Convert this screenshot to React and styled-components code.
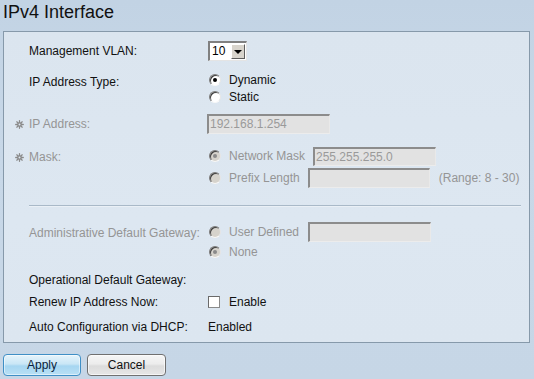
import React from "react";
import styled, { createGlobalStyle, css } from "styled-components";

const Global = createGlobalStyle`
  html, body { margin: 0; padding: 0; }
  body {
    width: 534px; height: 379px; overflow: hidden;
    background: linear-gradient(180deg, #c2d3e4 0%, #c8d8e8 40%, #c6d6e6 100%);
    font-family: "Liberation Sans", Arial, sans-serif;
    font-size: 12px; color: #111;
  }
`;

const Page = styled.div`
  padding: 0 4px 0 3px;
`;

const Title = styled.h1`
  margin: 0; padding-top: 1px;
  height: 31px; box-sizing: border-box;
  font-size: 18px; font-weight: normal; line-height: 22px;
  color: #111;
`;

const Panel = styled.div`
  width: 527px; height: 312px; box-sizing: border-box;
  border: 1px solid #8699aa;
  background: linear-gradient(180deg, #dbe5ef 0%, #dde7f1 60%, #dce6f0 100%);
  padding: 0 8px 0 25px;
`;

const Row = styled.div`
  display: grid;
  grid-template-columns: 179px 1fr;
  align-items: center;
  height: ${p => p.$h || 20}px;
  margin-top: ${p => p.$mt || 0}px;
`;

const Label = styled.div`
  display: flex; align-items: center;
  color: ${p => (p.$disabled ? "#959595" : "#111")};
  margin-left: ${p => (p.$icon ? -14 : 0)}px;
  gap: 5px;
  align-self: ${p => (p.$top ? "start" : "center")};
  padding-top: ${p => (p.$top ? 4 : 0)}px;
`;

const Controls = styled.div`
  display: flex; align-items: center;
`;

const Stack = styled.div`
  display: flex; flex-direction: column;
`;

const Line = styled.div`
  display: flex; align-items: center;
  height: ${p => p.$h || 20}px;
  margin-top: ${p => p.$mt || 0}px;
`;

const Radio = styled.span`
  display: inline-block; box-sizing: border-box;
  width: 12px; height: 12px; border-radius: 50%;
  margin-left: 1px; margin-right: 8px;
  border: 1px solid;
  border-color: #7c7c7c #e6e6e6 #f8f8f8 #7c7c7c;
  background: ${p => (p.$disabled ? "#d6d3cc" : "#fff")};
  box-shadow: inset 1px 1px 0 #3e3e3e;
  position: relative;
  ${p => p.$checked && css`
    &::after {
      content: ""; position: absolute;
      left: 3px; top: 3px; width: 4px; height: 4px; border-radius: 50%;
      background: ${p.$disabled ? "#8a8a8a" : "#000"};
    }
  `}
`;

const OptText = styled.span`
  color: ${p => (p.$disabled ? "#959595" : "#111")};
  margin-right: ${p => p.$mr || 0}px;
`;

const TextBox = styled.div`
  box-sizing: border-box;
  width: ${p => p.$w}px; height: ${p => p.$hh || 20}px;
  margin-left: ${p => p.$ml || 0}px;
  background: #e2e2e2;
  border-top: 2px solid #8c8c8c;
  border-left: 2px solid #8c8c8c;
  border-right: 1px solid #e9e9e9;
  border-bottom: 1px solid #ececec;
  color: #9a9a9a;
  padding-left: 1px;
  line-height: 16px;
  font-size: 12px;
`;

const Select = styled.div`
  box-sizing: border-box;
  width: 39px; height: 20px;
  display: flex; align-items: stretch;
  background: #fff;
  border-top: 2px solid #808080; border-left: 2px solid #808080;
  border-right: 1px solid #e4e4e4; border-bottom: 1px solid #e4e4e4;
  margin-top: 1px;
`;

const SelectValue = styled.span`
  flex: 1; padding-left: 2px; line-height: 17px; font-size: 12px; color: #000;
`;

const SelectBtn = styled.span`
  width: 14px; margin: 1px;
  background: #d8d4cc;
  border-top: 1px solid #fff; border-left: 1px solid #fff;
  border-right: 1px solid #5e5e5e; border-bottom: 1px solid #5e5e5e;
  box-sizing: border-box;
  display: flex; align-items: center; justify-content: center;
`;

const Arrow = styled.span`
  width: 0; height: 0;
  border-left: 4px solid transparent; border-right: 4px solid transparent;
  border-top: 4px solid #000;
`;

const Checkbox = styled.span`
  display: inline-block; box-sizing: border-box;
  width: 12px; height: 12px; background: #fff;
  border: 1px solid #8a8a8a;
  border-top-color: #6a6a6a; border-left-color: #6a6a6a;
  margin-right: 9px;
`;

const Separator = styled.div`
  margin-top: 17px;
  height: 1px; background: #a9b9c8;
  border-bottom: 1px solid #eaf0f6;
`;

const Hint = styled.span`
  color: #959595; margin-left: 9px;
`;

const Buttons = styled.div`
  display: flex; gap: 6px; margin-top: 11px;
`;

const Button = styled.button`
  box-sizing: border-box;
  width: ${p => p.$w}px; height: 22px;
  border-radius: 4px;
  font-family: "Liberation Sans", Arial, sans-serif;
  font-size: 12px; padding: 0; cursor: pointer;
  ${p => p.$primary ? css`
    border: 1px solid #3f8fc6;
    color: #0a1e3a;
    background: linear-gradient(180deg, #e6f4fb 0%, #c9e6f6 45%, #a6d6f1 55%, #b9e0f5 100%);
    box-shadow: inset 0 0 0 1px rgba(255,255,255,0.5);
  ` : css`
    border: 1px solid #707070;
    color: #111;
    background: linear-gradient(180deg, #f6f6f6 0%, #ececec 45%, #dcdcdc 55%, #e6e6e6 100%);
    box-shadow: inset 0 0 0 1px rgba(255,255,255,0.6);
  `}
`;

const Gear = () => (
  <svg width="9" height="9" viewBox="0 0 10 10">
    <g stroke="#8a8a8a" strokeWidth="1.4" strokeLinecap="round">
      <line x1="5" y1="0.8" x2="5" y2="9.2" />
      <line x1="0.8" y1="5" x2="9.2" y2="5" />
      <line x1="2" y1="2" x2="8" y2="8" />
      <line x1="8" y1="2" x2="2" y2="8" />
    </g>
    <circle cx="5" cy="5" r="2.6" fill="#8a8a8a" />
    <circle cx="5" cy="5" r="1.1" fill="#dde7f0" />
  </svg>
);

export default function App() {
  return (
    <>
      <Global />
      <Page>
        <Title>IPv4 Interface</Title>
        <Panel>
          <Row $mt={8}>
            <Label>Management VLAN:</Label>
            <Controls>
              <Select>
                <SelectValue>10</SelectValue>
                <SelectBtn><Arrow /></SelectBtn>
              </Select>
            </Controls>
          </Row>

          <Row $mt={11} $h={34}>
            <Label $top>IP Address Type:</Label>
            <Stack>
              <Line $h={17}><Radio $checked /><OptText>Dynamic</OptText></Line>
              <Line $h={17}><Radio /><OptText>Static</OptText></Line>
            </Stack>
          </Row>

          <Row $mt={9}>
            <Label $disabled $icon><Gear />IP Address:</Label>
            <Controls>
              <TextBox $w={123} $ml={-1}>192.168.1.254</TextBox>
            </Controls>
          </Row>

          <Row $mt={12} $h={42}>
            <Label $disabled $icon $top><Gear />Mask:</Label>
            <Stack>
              <Line $h={20}>
                <Radio $disabled $checked />
                <OptText $disabled $mr={8}>Network Mask</OptText>
                <TextBox $w={123} $hh={19}>255.255.255.0</TextBox>
              </Line>
              <Line $h={21} $mt={1}>
                <Radio $disabled />
                <OptText $disabled $mr={8}>Prefix Length</OptText>
                <TextBox $w={122} />
                <Hint>(Range: 8 - 30)</Hint>
              </Line>
            </Stack>
          </Row>

          <Separator />

          <Row $mt={15} $h={40}>
            <Label $disabled $top>Administrative Default Gateway:</Label>
            <Stack>
              <Line $h={20}>
                <Radio $disabled />
                <OptText $disabled $mr={9}>User Defined</OptText>
                <TextBox $w={123} />
              </Line>
              <Line $h={20}>
                <Radio $disabled $checked />
                <OptText $disabled>None</OptText>
              </Line>
            </Stack>
          </Row>

          <Row $mt={8}>
            <Label>Operational Default Gateway:</Label>
            <Controls />
          </Row>

          <Row $mt={2}>
            <Label>Renew IP Address Now:</Label>
            <Controls>
              <Checkbox />
              <OptText>Enable</OptText>
            </Controls>
          </Row>

          <Row $mt={5}>
            <Label>Auto Configuration via DHCP:</Label>
            <Controls>Enabled</Controls>
          </Row>
        </Panel>
        <Buttons>
          <Button $primary $w={78}>Apply</Button>
          <Button $w={79}>Cancel</Button>
        </Buttons>
      </Page>
    </>
  );
}
